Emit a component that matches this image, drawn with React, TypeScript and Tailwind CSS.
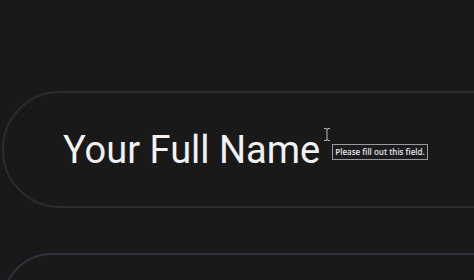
import React from "react";

export default function App() {
  return (
    <div className="relative h-[280px] w-[474px] overflow-hidden bg-[#19191a]">
      <div className="flex flex-col gap-[45px] pl-[2px] pt-[91px]">
        <div className="flex h-[117px] w-[560px] items-center rounded-l-[58px] border-2 border-[#2c2c2f] bg-[#19191a] pl-[59px]">
          <span className="font-['Roboto',sans-serif] text-[38px] leading-none text-[#f2f2f2]">Your Full Name</span>
        </div>
        <div className="h-[117px] w-[560px] rounded-l-[50px] border-2 border-[#2f3442] bg-[#19191a]" />
      </div>
      <svg className="absolute left-[323px] top-[128px]" width="8" height="13" viewBox="0 0 8 13">
        <path d="M1 0.5h2.2M4.8 0.5H7M4 1v11M1 12.5h2.2M4.8 12.5H7M3 1h2M3 12h2" stroke="#b8b8b8" strokeWidth="1" fill="none" />
      </svg>
      <div className="absolute left-[332px] top-[144px] flex h-[16px] w-[96px] items-center justify-center border border-[#9a9a9a] bg-[#1c1c1e] font-['Open_Sans',sans-serif] text-[8px] font-semibold leading-none text-[#e6e6e6]">
        Please fill out this field.
      </div>
    </div>
  );
}
